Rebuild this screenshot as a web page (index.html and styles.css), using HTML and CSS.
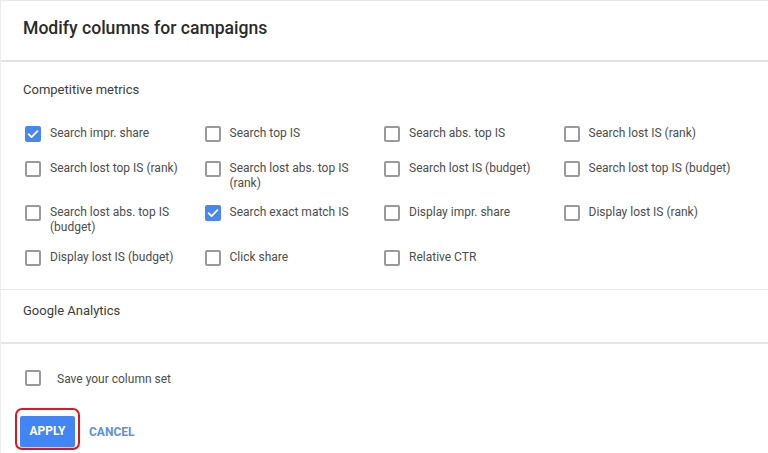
FILE: index.html
```html
<!DOCTYPE html>
<html lang="en">
<head>
<meta charset="utf-8">
<title>Modify columns for campaigns</title>
<link rel="stylesheet" href="styles.css">
</head>
<body>
<div class="panel">
  <header class="header">
    <h1 class="title">Modify columns for campaigns</h1>
  </header>
  <section class="section section-metrics">
    <h2 class="section-title">Competitive metrics</h2>
    <div class="grid">
      <label class="item"><span class="box checked"><svg viewBox="0 0 16 16"><path d="M3.6 8.2 6.6 11.1 12.4 5.1" /></svg></span><span class="label">Search impr. share</span></label>
      <label class="item"><span class="box"></span><span class="label">Search top IS</span></label>
      <label class="item"><span class="box"></span><span class="label">Search abs. top IS</span></label>
      <label class="item"><span class="box"></span><span class="label">Search lost IS (rank)</span></label>

      <label class="item"><span class="box"></span><span class="label">Search lost top IS (rank)</span></label>
      <label class="item"><span class="box"></span><span class="label">Search lost abs. top IS (rank)</span></label>
      <label class="item"><span class="box"></span><span class="label">Search lost IS (budget)</span></label>
      <label class="item"><span class="box"></span><span class="label">Search lost top IS (budget)</span></label>

      <label class="item"><span class="box"></span><span class="label">Search lost abs. top IS (budget)</span></label>
      <label class="item"><span class="box checked"><svg viewBox="0 0 16 16"><path d="M3.6 8.2 6.6 11.1 12.4 5.1" /></svg></span><span class="label">Search exact match IS</span></label>
      <label class="item"><span class="box"></span><span class="label">Display impr. share</span></label>
      <label class="item"><span class="box"></span><span class="label">Display lost IS (rank)</span></label>

      <label class="item"><span class="box"></span><span class="label">Display lost IS (budget)</span></label>
      <label class="item"><span class="box"></span><span class="label">Click share</span></label>
      <label class="item"><span class="box"></span><span class="label">Relative CTR</span></label>
    </div>
  </section>
  <section class="section section-ga">
    <h2 class="section-title">Google Analytics</h2>
  </section>
  <footer class="footer">
    <label class="save"><span class="box"></span><span class="save-label">Save your column set</span></label>
    <div class="actions">
      <span class="highlight"><button class="btn-apply" type="button">APPLY</button></span>
      <button class="btn-cancel" type="button">CANCEL</button>
    </div>
  </footer>
</div>
</body>
</html>
```
FILE: styles.css
```css
* { box-sizing: border-box; }
html, body { margin: 0; padding: 0; background: #ffffff; }
body {
  font-family: Roboto, "Liberation Sans", Arial, sans-serif;
  color: #333;
  width: 768px;
  height: 453px;
  overflow: hidden;
}
.panel {
  width: 768px;
  height: 453px;
  border-left: 1px solid #ececec;
  border-top: 1px solid #e9e9e9;
}
.header {
  height: 61px;
  padding: 15px 0 0 22px;
  border-bottom: 2px solid #e2e2e2;
}
.title {
  margin: 0;
  font-size: 17.6px;
  line-height: 24px;
  font-weight: 500;
  color: #2b2b2b;
}
.section-title {
  margin: 0;
  font-size: 13px;
  line-height: 16px;
  font-weight: 400;
  color: #3c3c3c;
}
.section-metrics {
  padding: 20px 0 19px 22px;
  border-bottom: 1px solid #e8e8e8;
}
.section-metrics .section-title { margin-bottom: 28px; }
.grid {
  display: grid;
  grid-template-columns: repeat(4, 179.5px);
  row-gap: 14.5px;
  padding-left: 2px;
}
.item {
  display: flex;
  align-items: flex-start;
  gap: 9px;
  min-height: 20px;
}
.box {
  flex: none;
  width: 16px;
  height: 16px;
  border: 2px solid #9a9a9a;
  border-radius: 2px;
  background: #fff;
  display: flex;
  align-items: center;
  justify-content: center;
}
.box.checked {
  background: #4a86f0;
  border-color: #4a86f0;
}
.box svg {
  width: 16px;
  height: 16px;
  flex: none;
}
.box svg path {
  fill: none;
  stroke: #ffffff;
  stroke-width: 1.8;
  stroke-linecap: round;
  stroke-linejoin: round;
}
.label {
  font-size: 12px;
  line-height: 15px;
  color: #4d4d4d;
  max-width: 150px;
}
.section-ga {
  height: 54px;
  padding: 13px 0 0 22px;
  border-bottom: 2px solid #e6e6e6;
}
.footer {
  padding: 25px 0 0 24px;
}
.save {
  display: flex;
  align-items: center;
  gap: 16px;
}
.save-label {
  font-size: 12px;
  line-height: 16px;
  color: #4d4d4d;
  padding-top: 2px;
}
.actions {
  display: flex;
  align-items: center;
  gap: 9px;
  margin-top: 21px;
  margin-left: -10px;
}
.highlight {
  display: inline-flex;
  border: 2px solid #e2141e;
  border-radius: 7px;
  padding: 6px 3px 1px 3px;
}
.btn-apply {
  width: 55px;
  height: 31px;
  border: none;
  border-radius: 2px;
  background: #4285f4;
  color: #ffffff;
  font-family: Roboto, "Liberation Sans", Arial, sans-serif;
  font-size: 12px;
  font-weight: 700;
  padding: 0;
  box-shadow: 0 1px 1px rgba(0,0,0,0.2);
}
.btn-cancel {
  border: none;
  background: none;
  color: #5b8ff0;
  font-family: Roboto, "Liberation Sans", Arial, sans-serif;
  font-size: 12px;
  font-weight: 700;
  padding: 6px 0 0 0;
}
```
